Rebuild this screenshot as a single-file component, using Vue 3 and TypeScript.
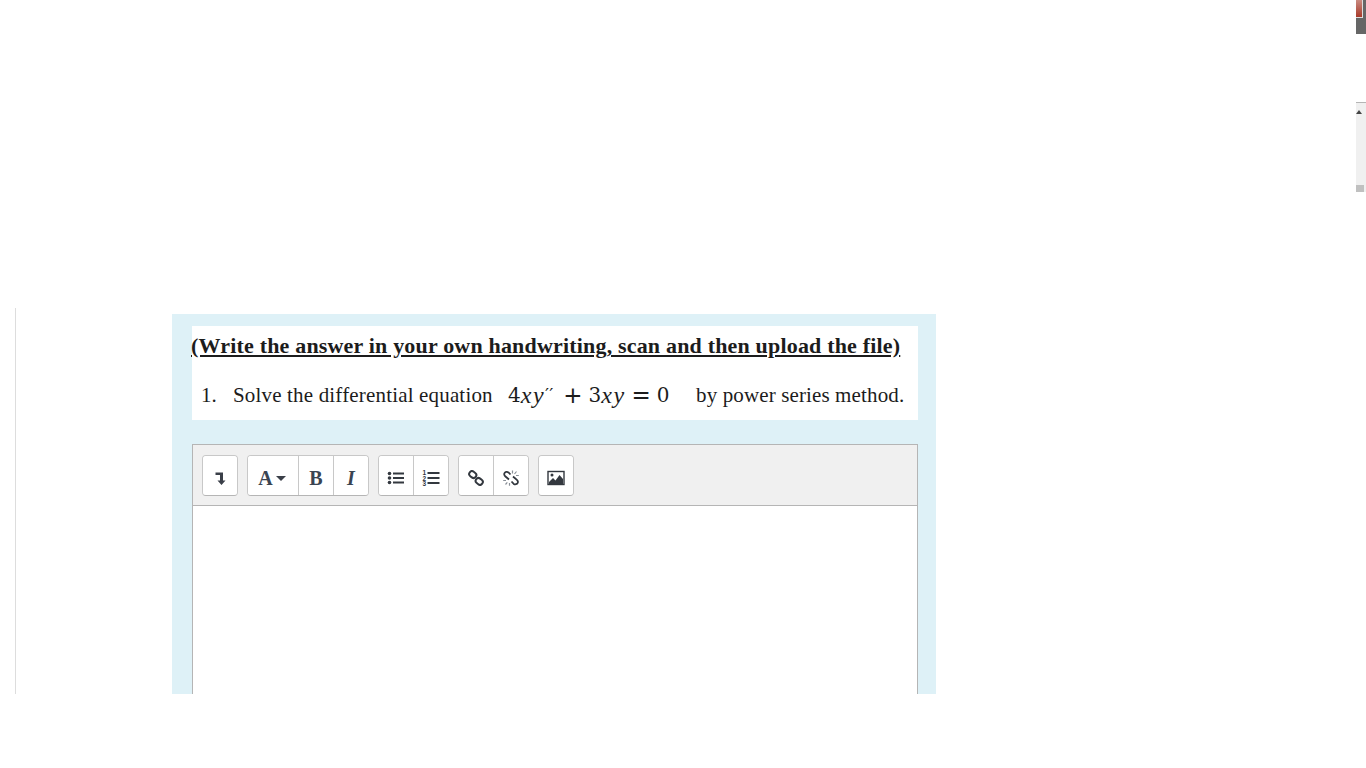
<script setup lang="ts">
// toolbar groups are just static markup, nothing here is wired up
const decorative = true;
</script>

<template>
  <div class="page" :data-decorative="decorative">
    <div class="scroll-top"><div class="scroll-red"></div></div>
    <div class="scroll-mid">
      <div class="scroll-arrow"></div>
      <div class="scroll-thumb"></div>
    </div>

    <div class="stage">
      <div class="panel">
        <div class="question">
          <div class="title">(Write the answer in your own handwriting, scan and then upload the file)</div>
          <div class="line">
            <span class="num">1.</span>
            <span class="solve">Solve the differential equation</span>
            <span class="math"><span>4</span><i>xy</i><span class="primes">′′</span><span class="op">+</span><span>3</span><i>xy</i><span class="op">=</span><span>0</span></span>
            <span class="method">by power series method.</span>
          </div>
        </div>

        <div class="editor">
          <div class="toolbar">
            <div class="group">
              <button class="btn">
                <svg width="16" height="16" viewBox="0 0 16 16"><path d="M3.500 2.500h7.500v8h2.500L9.500 15l-4-4.500H8V5H3.500z" fill="#3a3f48" /></svg>
              </button>
            </div>
            <div class="group">
              <button class="btn btn-wide"><span class="serif bold">A</span><span class="caret"></span></button>
              <button class="btn"><span class="serif bold">B</span></button>
              <button class="btn"><span class="serif ital">I</span></button>
            </div>
            <div class="group">
              <button class="btn">
                <svg width="18" height="16" viewBox="0 0 18 16" fill="#33383f">
                  <circle cx="2.500" cy="3.500" r="1.800" /><circle cx="2.500" cy="8" r="1.800" /><circle cx="2.500" cy="12.500" r="1.800" />
                  <rect x="6" y="2.500" width="11" height="2" /><rect x="6" y="7" width="11" height="2" /><rect x="6" y="11.500" width="11" height="2" />
                </svg>
              </button>
              <button class="btn">
                <svg width="18" height="18" viewBox="0 0 18 18" fill="#33383f">
                  <text x="0.500" y="6" class="tiny">1</text><text x="0.500" y="11.500" class="tiny">2</text><text x="0.500" y="17" class="tiny">3</text>
                  <rect x="5.500" y="3" width="12" height="2" /><rect x="5.500" y="8" width="12" height="2" /><rect x="5.500" y="13" width="12" height="2" />
                </svg>
              </button>
            </div>
            <div class="group">
              <button class="btn">
                <svg width="16" height="16" viewBox="0 0 16 16" fill="none" stroke="#33383f" stroke-width="2">
                  <rect x="1" y="1.800" width="7.500" height="5.600" rx="2.800" transform="rotate(38 4.800 4.600)" />
                  <rect x="7.500" y="8.600" width="7.500" height="5.600" rx="2.800" transform="rotate(38 11.200 11.400)" />
                </svg>
              </button>
              <button class="btn">
                <svg width="16" height="16" viewBox="0 0 16 16" fill="none" stroke="#33383f" stroke-width="1.800">
                  <path d="M7.500 4.500 5.500 2.400C4 1.400 2 2 1.400 3.300c-.5 1.200 0 2.200.8 2.900L6 9.500" />
                  <path d="M8.500 11.500l2.200 2.400c1.500.9 3.400.3 4-1 .5-1.200 0-2.300-.8-3L10 6.500" />
                  <path stroke="#8a9098" stroke-width="1.200" d="M9.500 .5v3M13.500 1.500l-2 2.500M15.800 5.500H13M.2 10.500H3M2.500 14.500l1.800-2.200M6.500 15.800V13" />
                </svg>
              </button>
            </div>
            <div class="group">
              <button class="btn">
                <svg width="18" height="16" viewBox="0 0 18 16">
                  <rect x="1" y="1.500" width="16" height="13" fill="#fff" stroke="#33383f" stroke-width="1.400" />
                  <path d="M2 14v-2l4-4 2.500 2.500L12.500 5 16 9v5z" fill="#33383f" />
                  <circle cx="5" cy="5" r="1.500" fill="#33383f" />
                </svg>
              </button>
            </div>
          </div>
          <div class="content"></div>
        </div>
      </div>
    </div>
  </div>
</template>

<style scoped>
.page {
  position: relative;
  width: 1366px;
  height: 768px;
  padding-top: 308px;
  box-sizing: border-box;
  overflow: hidden;
  background: #fff;
}

.scroll-top {
  position: absolute;
  top: 0;
  right: 0;
  width: 10px;
  height: 34px;
  background: #666;
}

.scroll-red {
  width: 6px;
  height: 17px;
  background: linear-gradient(#c98a80, #a83a2a);
  border-right: 1px solid #ddd;
  border-bottom: 1px solid #ddd;
}

.scroll-mid {
  position: absolute;
  top: 102px;
  right: 0;
  width: 10px;
  height: 90px;
  box-sizing: border-box;
  border-top: 1px solid #b5b5b5;
  background: #f0f0f0;
}

.scroll-arrow {
  position: absolute;
  top: 7px;
  left: 0;
  border-left: 3px solid transparent;
  border-right: 3px solid transparent;
  border-bottom: 4px solid #444;
}

.scroll-thumb {
  position: absolute;
  bottom: 0;
  left: 0;
  width: 8px;
  height: 7px;
  background: #c0c0c0;
}

.stage {
  margin-left: 15px;
  height: 386px;
  box-sizing: border-box;
  border-left: 1px solid #ddd;
  padding: 6px 0 0 156px;
  overflow: hidden;
}

.panel {
  width: 764px;
  height: 600px;
  box-sizing: border-box;
  padding: 12px 18px 0 20px;
  background: #def1f7;
}

.question {
  height: 94px;
  background: #fff;
  font-family: "Liberation Serif", "Times New Roman", serif;
  color: #1c1c1c;
}

.title {
  height: 38px;
  margin-left: -1px;
  padding-top: 6px;
  box-sizing: border-box;
  font-size: 22px;
  line-height: 28px;
  font-weight: bold;
  letter-spacing: 0.18px;
  text-decoration: underline;
  white-space: nowrap;
}

.line {
  display: flex;
  align-items: baseline;
  height: 56px;
  padding-top: 19px;
  box-sizing: border-box;
  font-size: 21px;
  line-height: 24px;
  white-space: nowrap;
}

.num {
  width: 32px;
  margin-left: 9px;
}

.solve {
  width: 275px;
  letter-spacing: 0.17px;
}

.math {
  display: flex;
  width: 188px;
  font-family: "DejaVu Serif", serif;
  font-size: 20px;
}

.math i {
  font-family: "Liberation Serif", serif;
  font-size: 24px;
  letter-spacing: 1.500px;
}

.primes {
  font-family: "DejaVu Sans", sans-serif;
  font-size: 18px;
  margin-right: 4px;
}

.op {
  font-family: "DejaVu Sans", sans-serif;
  font-size: 23px;
  margin: 0 6px;
}

.method {
  letter-spacing: 0.13px;
}

.toolbar {
  display: flex;
  gap: 9px;
  height: 61px;
  box-sizing: border-box;
  padding: 10px 0 0 9px;
  background: #f0f0f0;
  border-bottom: 1px solid #b5b5b5;
}

.editor {
  margin-top: 24px;
  border: 1px solid #b5b5b5;
}

.content {
  height: 300px;
  background: #fff;
}

.group {
  display: flex;
  height: 41px;
  box-sizing: border-box;
  border: 1px solid #c8c8c8;
  border-bottom-color: #b5b5b5;
  border-radius: 4px;
  background: #fff;
  overflow: hidden;
}

.btn {
  display: flex;
  align-items: center;
  justify-content: center;
  width: 35px;
  height: 100%;
  padding: 5px 0 0;
  border: 0;
  border-left: 1px solid #c8c8c8;
  background: #fff;
}

.btn:first-child {
  width: 34px;
  border-left: 0;
}

.btn.btn-wide {
  width: 50px;
  gap: 3px;
  padding-right: 2px;
}

.serif {
  font-family: "Liberation Serif", serif;
  font-size: 20px;
  color: #3a4452;
}

.bold {
  font-weight: bold;
}

.ital {
  font-style: italic;
  font-weight: bold;
}

.caret {
  border-left: 5px solid transparent;
  border-right: 5px solid transparent;
  border-top: 5px solid #3a3f48;
}

.tiny {
  font-family: "Liberation Sans", sans-serif;
  font-size: 6.500px;
  font-weight: bold;
}
</style>

<style>
body {
  margin: 0;
  background: #fff;
}
</style>
